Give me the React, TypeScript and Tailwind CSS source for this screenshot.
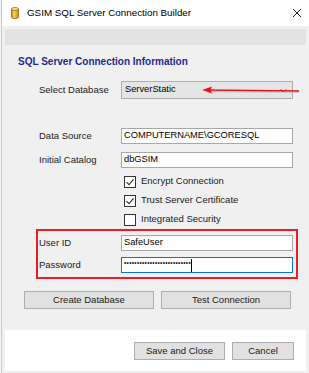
import React from "react";

const font = { fontFamily: '"Liberation Sans", Arial, sans-serif' };

function DbIcon() {
  return (
    <svg width="8" height="12" viewBox="0 0 8 12">
      <defs>
        <linearGradient id="g" x1="0" x2="1" y1="0" y2="0">
          <stop offset="0" stopColor="#c98f10" />
          <stop offset="0.4" stopColor="#f7d257" />
          <stop offset="1" stopColor="#c48a0c" />
        </linearGradient>
      </defs>
      <path d="M0.5 2 V10 A3.5 1.5 0 0 0 7.5 10 V2 Z" fill="url(#g)" stroke="#9a6a08" strokeWidth="0.8" />
      <ellipse cx="4" cy="2" rx="3.5" ry="1.5" fill="#fbe48c" stroke="#9a6a08" strokeWidth="0.8" />
    </svg>
  );
}

function Check({ checked }: { checked: boolean }) {
  return (
    <div className="w-[12px] h-[12px] border border-[#333333] bg-white flex items-center justify-center">
      {checked && (
        <svg width="10" height="10" viewBox="0 0 10 10">
          <path d="M1.5 5.2 L4 7.6 L8.6 2.4" fill="none" stroke="#333" strokeWidth="1.1" />
        </svg>
      )}
    </div>
  );
}

function TextBox({ value, focus }: { value: string; focus?: boolean }) {
  return (
    <div
      className={
        "w-[172px] h-[16px] bg-white border flex items-center pl-[2px] text-[9.3px] text-black whitespace-nowrap " +
        (focus ? "border-[#0078d7]" : "border-[#a8a8a8]")
      }
    >
      {value}
    </div>
  );
}

function Btn({ label, w }: { label: string; w: string }) {
  return (
    <div
      className={
        "h-[18px] bg-[#e1e1e1] border border-[#adadad] flex items-center justify-center text-[9.5px] text-[#1a1a1a] " +
        w
      }
    >
      {label}
    </div>
  );
}

export default function App() {
  return (
    <div className="w-[309px] h-[373px] bg-[#f0f0f0] overflow-hidden flex flex-col relative" style={font}>
      {/* left desktop edge */}
      <div className="absolute left-0 top-0 w-[2px] h-full bg-[#f5f5f5] border-r border-[#c9c9c9]" />
      {/* title bar */}
      <div className="h-[26px] bg-white flex items-center pl-[11px] pr-[7px] shrink-0">
        <DbIcon />
        <div className="ml-[8px] text-[9.8px] text-black whitespace-nowrap">GSIM SQL Server Connection Builder</div>
        <div className="ml-auto w-[10px] h-[10px] flex items-center justify-center">
          <svg width="10" height="10" viewBox="0 0 10 10">
            <path d="M1 1 L9 9 M9 1 L1 9" stroke="#222" strokeWidth="1" />
          </svg>
        </div>
      </div>
      <div className="flex flex-col pl-[5px] pr-[3px]">
        <div className="mt-[3px] h-[16px] bg-[#e3e3e3]" />
        <div className="mt-[11px] h-[12px] leading-[12px] pl-[13px] text-[10px] font-bold text-[#1f2a8c] whitespace-nowrap">
          SQL Server Connection Information
        </div>
        {/* select database */}
        <div className="mt-[13px] flex items-center relative">
          <div className="w-[116px] pl-[34px] text-[9.5px] text-[#1a1a1a] whitespace-nowrap">Select Database</div>
          <div className="w-[172px] h-[18px] bg-[#e5e5e5] border border-[#adadad] flex items-center pl-[3px] text-[9.3px] text-black">
            ServerStatic
            <svg className="ml-auto mr-[5px]" width="7" height="5" viewBox="0 0 7 5">
              <path d="M0.5 1 L3.5 4 L6.5 1" fill="none" stroke="#606060" strokeWidth="0.9" />
            </svg>
          </div>
          <svg className="absolute left-[195px] top-[4px]" width="102" height="10" viewBox="0 0 102 10">
            <path d="M10 6.5 L99 7.5" stroke="#b0b0b0" strokeWidth="1.2" opacity="0.6" />
            <path d="M9 5 L99 6" stroke="#e8141c" strokeWidth="1.4" />
            <path d="M2 5 L12 1.5 L10.5 5 L12 8.5 Z" fill="#e8141c" />
          </svg>
        </div>
        <div className="mt-[29px] flex flex-col gap-[8px]">
          <div className="flex items-center">
            <div className="w-[116px] pl-[34px] text-[9.5px] text-[#1a1a1a] whitespace-nowrap">Data Source</div>
            <TextBox value="COMPUTERNAME\GCORESQL" />
          </div>
          <div className="flex items-center">
            <div className="w-[116px] pl-[34px] text-[9.5px] text-[#1a1a1a] whitespace-nowrap">Initial Catalog</div>
            <TextBox value="dbGSIM" />
          </div>
        </div>
        <div className="mt-[4px] flex flex-col pl-[119px]">
          {[
            ["Encrypt Connection", true],
            ["Trust Server Certificate", true],
            ["Integrated Security", false],
          ].map(([l, c]) => (
            <div key={l as string} className="h-[19px] flex items-center gap-[5px] text-[9.5px] text-[#1a1a1a]">
              <Check checked={c as boolean} />
              <span>{l as string}</span>
            </div>
          ))}
        </div>
        {/* red rectangle */}
        <div className="ml-[31px] w-[262px] border-2 border-[#ec1c24] pt-[4px] pb-[4px] flex flex-col gap-[6px]">
          <div className="flex items-center">
            <div className="w-[83px] pl-[1px] text-[9.5px] text-[#1a1a1a]">User ID</div>
            <TextBox value="SafeUser" />
          </div>
          <div className="flex items-center">
            <div className="w-[83px] pl-[1px] text-[9.5px] text-[#1a1a1a]">Password</div>
            <div className="w-[172px] h-[16px] bg-white border border-[#0078d7] flex items-center pl-[2px] relative overflow-hidden">
              <span className="text-[6.5px] leading-none tracking-[0.3px] text-[#111] whitespace-nowrap -mt-[3px]">
                ••••••••••••••••••••••••••
              </span>
              <div className="w-[1px] h-[13px] bg-black" />
            </div>
          </div>
        </div>
        <div className="mt-[12px] ml-[19px] flex gap-[7px]">
          <Btn label="Create Database" w="w-[130px]" />
          <Btn label="Test Connection" w="w-[130px]" />
        </div>
      </div>
      <div className="mt-[21px] ml-[5px] w-[301px] h-[41px] bg-white flex justify-end items-start pt-[12px] pr-[12px] gap-[7px]">
        <Btn label="Save and Close" w="w-[91px]" />
        <Btn label="Cancel" w="w-[62px]" />
      </div>
    </div>
  );
}
